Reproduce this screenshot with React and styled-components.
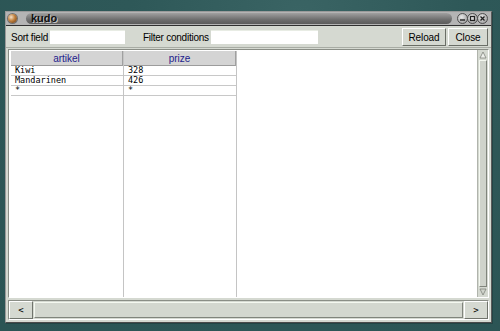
import React from "react";
import styled, { createGlobalStyle } from "styled-components";

const Global = createGlobalStyle`
  html, body { margin: 0; padding: 0; }
  body { width: 500px; height: 331px; overflow: hidden; background: #2e5858; font-family: "Liberation Sans", Arial, sans-serif; }
`;

const Desktop = styled.div`
  width: 500px;
  height: 331px;
  box-sizing: border-box;
  padding: 11px 8px 8px 5px;
  background: radial-gradient(ellipse at 60% 5%, #3a6464 0%, #2e5858 40%, #2b5454 100%);
  display: flex;
`;

const Window = styled.div`
  flex: 1;
  display: flex;
  flex-direction: column;
  background: #d5d9d1;
  border: 1px solid #9a9a9a;
  border-right-color: #5a5a5a;
  border-bottom-color: #4a4a4a;
  box-shadow: 1px 1px 0 #234444;
`;

const TitleBar = styled.div`
  height: 13px;
  display: flex;
  align-items: center;
  padding: 0 3px 0 2px;
  gap: 4px;
  background: #b4b4b4;
  border-bottom: 1px solid #303030;
`;

const Orb = styled.div`
  width: 9px;
  height: 9px;
  border-radius: 50%;
  background: radial-gradient(circle at 35% 35%, #f4e0c8 0%, #c0803c 45%, #5a3010 100%);
  box-shadow: 0 0 0 1px #707070;
`;

const TitleTab = styled.div`
  flex: 1;
  height: 11px;
  border-radius: 6px;
  background: linear-gradient(#a0a0a0, #6e6e6e 60%, #5c5c5c);
  display: flex;
  align-items: center;
  padding-left: 5px;
  margin-left: 5px;
`;

const TitleText = styled.span`
  font: bold 11px "Liberation Sans", Arial, sans-serif;
  color: #101010;
  text-shadow: 1px 1px 0 #c8c8c8;
  line-height: 11px;
`;

const WinButtons = styled.div`
  display: flex;
  margin-left: 2px;
`;

const WinButton = styled.div`
  width: 9px;
  height: 9px;
  border-radius: 50%;
  background: radial-gradient(circle at 40% 35%, #e8e8e8, #909090);
  border: 1px solid #505050;
  display: flex;
  align-items: center;
  justify-content: center;
  margin-left: -1px;
`;

const Toolbar = styled.div`
  height: 20px;
  display: flex;
  align-items: center;
  padding: 1px 3px 0 5px;
  border-bottom: 1px solid #a8aca4;
  margin-bottom: 1px;
`;

const Label = styled.span`
  font-size: 10px;
  letter-spacing: -0.25px;
  color: #000;
  margin-right: 2px;
  white-space: nowrap;
`;

const Input = styled.div`
  width: ${(p) => p.$w}px;
  height: 14px;
  background: #fff;
  box-sizing: border-box;
  border-top: 1px solid #e8ece4;
  margin-right: ${(p) => p.$mr || 0}px;
`;

const Spacer = styled.div`
  flex: 1;
`;

const Button = styled.div`
  width: ${(p) => p.$w}px;
  height: 18px;
  box-sizing: border-box;
  display: flex;
  align-items: center;
  justify-content: center;
  font-size: 10px;
  letter-spacing: -0.1px;
  background: #d5d9d1;
  border: 1px solid;
  border-color: #ffffff #6a6e66 #6a6e66 #ffffff;
  margin-left: 2px;
`;

const Main = styled.div`
  flex: 1;
  display: flex;
  flex-direction: column;
  padding: 0 2px 2px 2px;
  gap: 2px;
`;

const TableFrame = styled.div`
  flex: 1;
  display: flex;
  border: 1px solid;
  border-color: #8a8e86 #ffffff #ffffff #8a8e86;
  background: #fff;
  min-height: 0;
`;

const Sheet = styled.div`
  flex: 1;
  display: flex;
  padding: 1px 0 0 2px;
  background: #fff;
`;

const Column = styled.div`
  width: 112px;
  display: flex;
  flex-direction: column;
  border-right: 1px solid #c4c4c4;
`;

const Header = styled.div`
  height: 15px;
  box-sizing: border-box;
  background: #d4d4d4;
  border-right: 1px solid #a0a0a0;
  border-bottom: 1px solid #9c9c9c;
  color: #1c1c8c;
  font-size: 10px;
  display: flex;
  align-items: center;
  justify-content: center;
`;

const Cell = styled.div`
  height: 10px;
  box-sizing: border-box;
  border-bottom: 1px solid #c8c8c8;
  font: 8.5px "DejaVu Sans Mono", monospace;
  line-height: 9px;
  padding-left: ${(p) => p.$pl}px;
  color: #000;
  white-space: pre;
`;

const VScroll = styled.div`
  width: 10px;
  display: flex;
  flex-direction: column;
  background: #d5d9d1;
  border-left: 1px solid #b0b4ac;
`;

const Arrow = styled.div`
  height: ${(p) => p.$h}px;
  display: flex;
  align-items: center;
  justify-content: center;
`;

const VThumb = styled.div`
  flex: 1;
  margin: 0 1px;
  border: 1px solid;
  border-color: #f4f8f0 #80847c #80847c #f4f8f0;
  background: #cfd3cb;
`;

const HScroll = styled.div`
  height: 18px;
  display: flex;
  border: 1px solid;
  border-color: #8a8e86 #ffffff #ffffff #8a8e86;
  background: #d5d9d1;
`;

const HButton = styled.div`
  width: 22px;
  display: flex;
  align-items: center;
  justify-content: center;
  border: 1px solid;
  border-color: #ffffff #70746c #70746c #ffffff;
  font: 9px "DejaVu Sans Mono", monospace;
`;

const HTrack = styled.div`
  flex: 1;
  padding: 1px 1px;
  display: flex;
`;

const HThumb = styled.div`
  flex: 1;
  border: 1px solid;
  border-color: #f4f8f0 #80847c #80847c #f4f8f0;
  background: #d3d7cf;
`;

const columns = [
  { title: "artikel", rows: ["Kiwi", "Mandarinen", "*"] },
  { title: "prize", rows: ["328", "426", "*"] },
];

export default function App() {
  return (
    <>
      <Global />
      <Desktop>
        <Window>
          <TitleBar>
            <Orb />
            <TitleTab>
              <TitleText>kudo</TitleText>
            </TitleTab>
            <WinButtons>
              <WinButton>
                <svg width="7" height="7" viewBox="0 0 7 7"><path d="M1 5h5" stroke="#202020" strokeWidth="1.4" /></svg>
              </WinButton>
              <WinButton>
                <svg width="7" height="7" viewBox="0 0 7 7"><rect x="1.5" y="1.5" width="4" height="4" fill="none" stroke="#202020" strokeWidth="1.2" /></svg>
              </WinButton>
              <WinButton>
                <svg width="7" height="7" viewBox="0 0 7 7"><path d="M1.5 1.5l4 4M5.5 1.5l-4 4" stroke="#202020" strokeWidth="1.3" /></svg>
              </WinButton>
            </WinButtons>
          </TitleBar>
          <Toolbar>
            <Label>Sort field</Label>
            <Input $w={75} $mr={18} />
            <Label>Filter conditions</Label>
            <Input $w={107} />
            <Spacer />
            <Button $w={44}>Reload</Button>
            <Button $w={40}>Close</Button>
          </Toolbar>
          <Main>
            <TableFrame>
              <Sheet>
                {columns.map((c) => (
                  <Column key={c.title}>
                    <Header>{c.title}</Header>
                    {c.rows.map((r, i) => (
                      <Cell key={i} $pl={4}>{r}</Cell>
                    ))}
                  </Column>
                ))}
              </Sheet>
              <VScroll>
                <Arrow $h={10}>
                  <svg width="8" height="8" viewBox="0 0 8 8"><path d="M4 1L7 7H1Z" fill="#eef0ec" stroke="#80847c" strokeWidth="0.8" /></svg>
                </Arrow>
                <VThumb />
                <Arrow $h={10}>
                  <svg width="8" height="8" viewBox="0 0 8 8"><path d="M4 7L7 1H1Z" fill="#d0d4cc" stroke="#80847c" strokeWidth="0.8" /></svg>
                </Arrow>
              </VScroll>
            </TableFrame>
            <HScroll>
              <HButton>&lt;</HButton>
              <HTrack>
                <HThumb />
              </HTrack>
              <HButton>&gt;</HButton>
            </HScroll>
          </Main>
        </Window>
      </Desktop>
    </>
  );
}
